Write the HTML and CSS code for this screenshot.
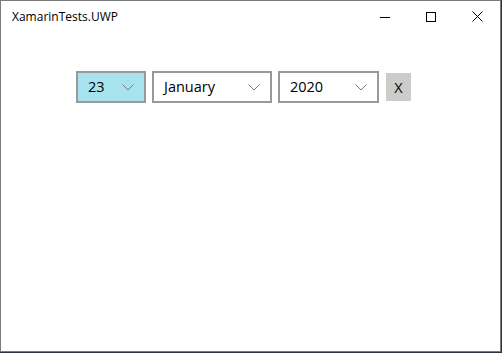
FILE: index.html
```html
<!DOCTYPE html>
<html>
<head>
<meta charset="utf-8">
<link rel="stylesheet" href="styles.css">
</head>
<body>
<div class="frame">
  <div class="window">
    <div class="titlebar">
      <div class="title">XamarinTests.UWP</div>
      <div class="caption-buttons">
        <div class="cap-btn">
          <svg width="10" height="10" viewBox="0 0 10 10"><path d="M0 5.5H10" stroke="#000" stroke-width="1"/></svg>
        </div>
        <div class="cap-btn">
          <svg width="10" height="10" viewBox="0 0 10 10"><rect x="0.5" y="0.5" width="9" height="9" fill="none" stroke="#000" stroke-width="1"/></svg>
        </div>
        <div class="cap-btn">
          <svg width="11" height="11" viewBox="0 0 11 11"><path d="M0.5 0.5L10.5 10.5M10.5 0.5L0.5 10.5" stroke="#000" stroke-width="1"/></svg>
        </div>
      </div>
    </div>
    <div class="content">
      <div class="row">
        <div class="combo combo-day">
          <span class="value">23</span>
          <svg class="chev" width="12" height="7" viewBox="0 0 12 7"><path d="M0.5 0.5L6 6L11.5 0.5" fill="none" stroke="#7a7a7a" stroke-width="1"/></svg>
        </div>
        <div class="combo combo-month">
          <span class="value">January</span>
          <svg class="chev" width="12" height="7" viewBox="0 0 12 7"><path d="M0.5 0.5L6 6L11.5 0.5" fill="none" stroke="#7a7a7a" stroke-width="1"/></svg>
        </div>
        <div class="combo combo-year">
          <span class="value">2020</span>
          <svg class="chev" width="12" height="7" viewBox="0 0 12 7"><path d="M0.5 0.5L6 6L11.5 0.5" fill="none" stroke="#7a7a7a" stroke-width="1"/></svg>
        </div>
        <div class="clear-btn">X</div>
      </div>
    </div>
  </div>
</div>
</body>
</html>
```
FILE: styles.css
```css
html, body {
  margin: 0;
  padding: 0;
  width: 502px;
  height: 353px;
  overflow: hidden;
  background: #2b3344;
}
.frame {
  width: 501px;
  height: 352px;
  box-sizing: border-box;
  border: 1px solid #7a7a7a;
  background: #ffffff;
  font-family: "Open Sans", "Noto Sans", sans-serif;
}
.window {
  display: flex;
  flex-direction: column;
  height: 100%;
}
.titlebar {
  height: 31px;
  display: flex;
  align-items: center;
  justify-content: space-between;
}
.title {
  padding-left: 11px;
  font-size: 12px;
  color: #000;
  padding-bottom: 1px;
}
.caption-buttons {
  display: flex;
  height: 100%;
}
.cap-btn {
  width: 46px;
  height: 100%;
  display: flex;
  align-items: center;
  justify-content: center;
}
.content {
  flex: 1;
  padding-top: 39px;
}
.row {
  display: flex;
  align-items: center;
  padding-left: 75px;
  gap: 6px;
}
.combo {
  box-sizing: border-box;
  height: 32px;
  border: 2px solid #999999;
  background: #fff;
  display: flex;
  align-items: center;
  justify-content: space-between;
  padding: 0 10px 0 10px;
}
.combo-day {
  width: 70px;
  background: #a7e3ee;
}
.combo-month {
  width: 120px;
}
.combo-year {
  width: 101px;
}
.value {
  font-size: 14.5px;
  color: #000;
  line-height: 1;
}
.chev {
  display: block;
}
.clear-btn {
  margin-left: 1px;
  width: 25px;
  height: 28px;
  background: #cccccc;
  display: flex;
  align-items: center;
  justify-content: center;
  font-size: 14.5px;
  color: #000;
}
```
